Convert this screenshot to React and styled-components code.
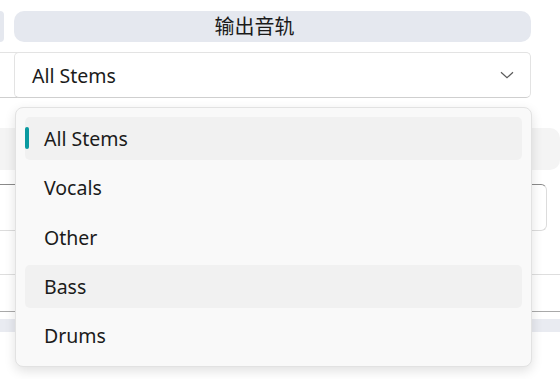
import React from 'react';
import styled, { createGlobalStyle } from 'styled-components';

const GlobalStyle = createGlobalStyle`
  html, body {
    margin: 0;
    padding: 0;
    background: #ffffff;
  }
  body {
    font-family: "Noto Sans", "Noto Sans CJK SC", sans-serif;
    color: #1b1b1b;
    overflow: hidden;
  }
`;

const Page = styled.div`
  position: relative;
  width: 560px;
  height: 379px;
  overflow: hidden;
  padding-top: 11px;
  box-sizing: border-box;
`;

const Grid = styled.div`
  display: grid;
  grid-template-columns: 4px 517px;
  grid-template-rows: 31px 46px;
  column-gap: 10px;
  row-gap: 10px;
`;

const Header = styled.div`
  background: #e5e8ef;
  border-radius: ${(p) => (p.$edge ? '0 10px 10px 0' : '10px')};
  display: flex;
  align-items: center;
  justify-content: center;
  padding-right: ${(p) => (p.$edge ? '0' : '36px')};
  font-size: 20px;
  line-height: 1;
  color: #1a1a1a;
`;

const Field = styled.div`
  background: #ffffff;
  border: 1px solid #e3e3e3;
  border-bottom-color: #cfcfcf;
  border-radius: ${(p) => (p.$edge ? '0 5px 5px 0' : '5px')};
  border-left-width: ${(p) => (p.$edge ? '0' : '1px')};
  display: flex;
  align-items: center;
  justify-content: space-between;
  padding: 0 16px 0 17px;
  font-size: 19.5px;
`;

const Chevron = styled.svg`
  width: 14px;
  height: 8px;
  fill: none;
  stroke: #5a5a5a;
  stroke-width: 1.2;
`;

const Band = styled.div`
  margin-top: 30px;
  height: 42px;
  background: #f4f4f4;
  border-radius: 0 10px 10px 0;
`;

const InputRow = styled.div`
  display: flex;
  margin-top: 14px;
  height: 47px;
  padding-right: 13px;
`;

const Input = styled.div`
  flex: 1;
  background: #ffffff;
  border: 1px solid #dcdcdc;
  border-top: 1px solid #8a8a8a;
  border-left: 0;
  border-radius: 0 6px 6px 0;
`;

const Line = styled.div`
  height: ${(p) => p.$gap}px;
  border-bottom: 1px solid ${(p) => p.$color};
`;

const Strip = styled.div`
  margin-top: 7px;
  height: 13px;
  background: #e9ebf1;
`;

const Popup = styled.div`
  position: absolute;
  left: 15px;
  top: 107px;
  width: 517px;
  height: 260px;
  box-sizing: border-box;
  background: #f9f9f9;
  border: 1px solid #e2e2e2;
  border-radius: 8px;
  box-shadow: 0 4px 12px rgba(0, 0, 0, 0.12);
  padding: 9px 9px;
  display: flex;
  flex-direction: column;
  gap: 6.3px;
`;

const Item = styled.div`
  position: relative;
  height: 43px;
  flex: none;
  border-radius: 5px;
  background: ${(p) => (p.$active ? '#f1f1f1' : 'transparent')};
  display: flex;
  align-items: center;
  padding-left: 19px;
  font-size: 19.5px;
  color: #1b1b1b;
`;

const Accent = styled.span`
  position: absolute;
  left: 0;
  top: 10px;
  width: 4px;
  height: 22px;
  border-radius: 2px;
  background: #0a9aa0;
`;

const stems = [
  { label: 'All Stems', selected: true },
  { label: 'Vocals' },
  { label: 'Other' },
  { label: 'Bass', hover: true },
  { label: 'Drums' },
];

export default function App() {
  return (
    <>
      <GlobalStyle />
      <Page>
        <Grid>
          <Header $edge />
          <Header>输出音轨</Header>
          <Field $edge />
          <Field>
            <span>All Stems</span>
            <Chevron viewBox="0 0 14 8">
              <path d="M1 1.2 L7 6.8 L13 1.2" />
            </Chevron>
          </Field>
        </Grid>

        <Band />
        <InputRow>
          <Input />
        </InputRow>
        <Line $gap={43} $color="#dedede" />
        <Line $gap={36} $color="#a9a9a9" />
        <Strip />

        <Popup>
          {stems.map((s) => (
            <Item key={s.label} $active={s.selected || s.hover}>
              {s.selected && <Accent />}
              {s.label}
            </Item>
          ))}
        </Popup>
      </Page>
    </>
  );
}
